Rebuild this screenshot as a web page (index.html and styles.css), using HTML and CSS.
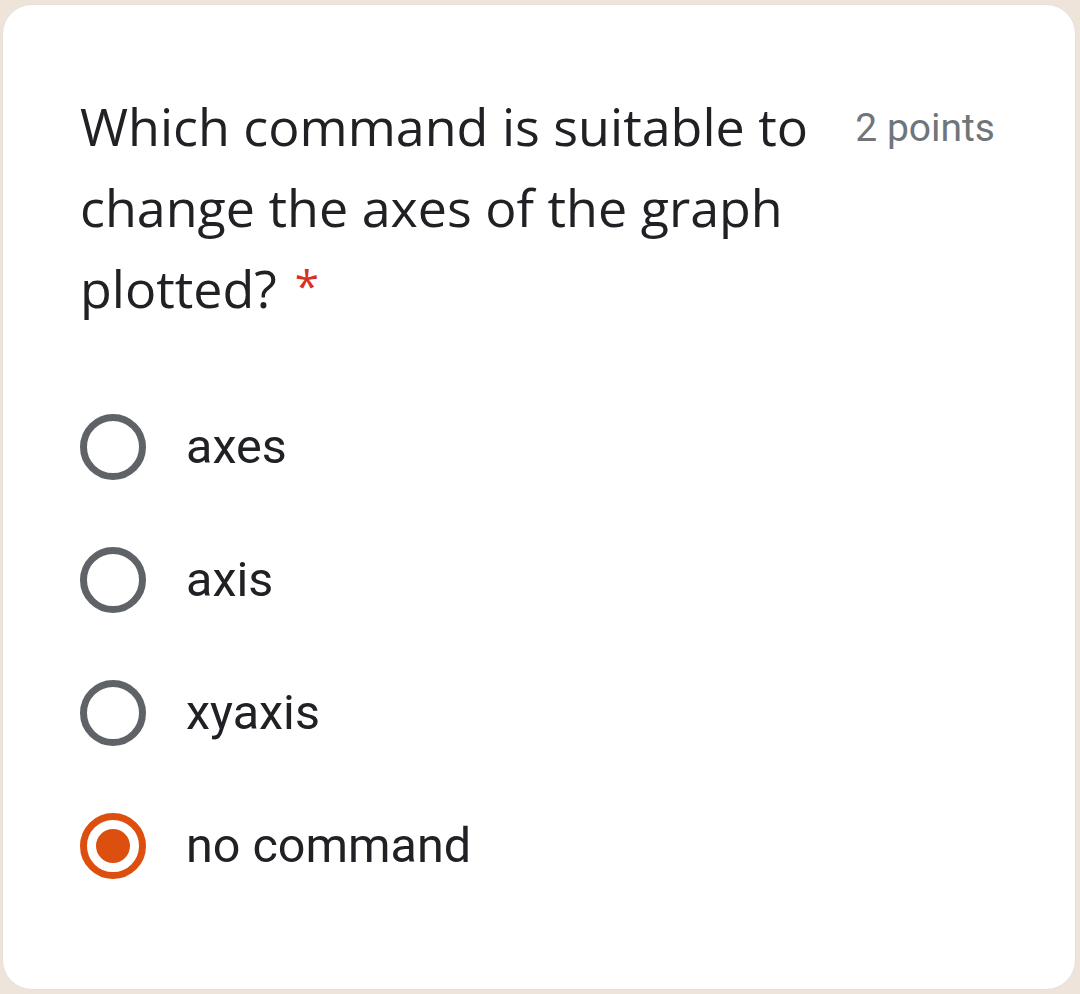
FILE: index.html
```html
<!DOCTYPE html>
<html>
<head>
<meta charset="utf-8">
<link rel="stylesheet" href="styles.css">
</head>
<body>
<div class="card">
  <div class="header">
    <div class="question"><span class="qtext">Which command is suitable to change the axes of the graph plotted?</span><span class="req">*</span></div>
    <div class="points">2 points</div>
  </div>
  <div class="options">
    <label class="option"><span class="radio"></span><span class="label">axes</span></label>
    <label class="option"><span class="radio"></span><span class="label">axis</span></label>
    <label class="option"><span class="radio"></span><span class="label">xyaxis</span></label>
    <label class="option"><span class="radio checked"></span><span class="label">no command</span></label>
  </div>
</div>
</body>
</html>
```
FILE: styles.css
```css
html, body {
  margin: 0;
  padding: 0;
}
body {
  background: #efe4da;
  width: 1080px;
  height: 994px;
  overflow: hidden;
  padding: 4px 4px 4px 2px;
  box-sizing: border-box;
}
.card {
  background: #ffffff;
  border-radius: 30px;
  height: 986px;
  box-sizing: border-box;
  padding: 80px 80px 0 77px;
  border: 1px solid #e6e0db;
}
.header {
  display: flex;
  align-items: flex-start;
  gap: 40px;
}
.question {
  flex: 1;
  font-family: "Open Sans", sans-serif;
  font-size: 52px;
  line-height: 81px;
  color: #202124;
}
.req {
  display: inline-block;
  color: #d93025;
  font-size: 44px;
  line-height: 36px;
  margin-left: 18px;
  vertical-align: 6px;
}
.points {
  font-family: Roboto, sans-serif;
  font-size: 39px;
  color: #70757a;
  line-height: 81px;
  padding-top: 3px;
  white-space: nowrap;
}
.options {
  margin-top: 52px;
  display: flex;
  flex-direction: column;
}
.option {
  display: flex;
  align-items: center;
  height: 133px;
  gap: 40px;
}
.radio {
  width: 66px;
  height: 66px;
  box-sizing: border-box;
  border: 7px solid #5f6368;
  border-radius: 50%;
  flex: none;
  display: flex;
  align-items: center;
  justify-content: center;
}
.radio.checked {
  border-color: #dc4f0e;
}
.radio.checked::after {
  content: "";
  width: 34px;
  height: 34px;
  border-radius: 50%;
  background: #dc4f0e;
}
.label {
  font-family: Roboto, sans-serif;
  font-size: 48.5px;
  color: #202124;
}
```
